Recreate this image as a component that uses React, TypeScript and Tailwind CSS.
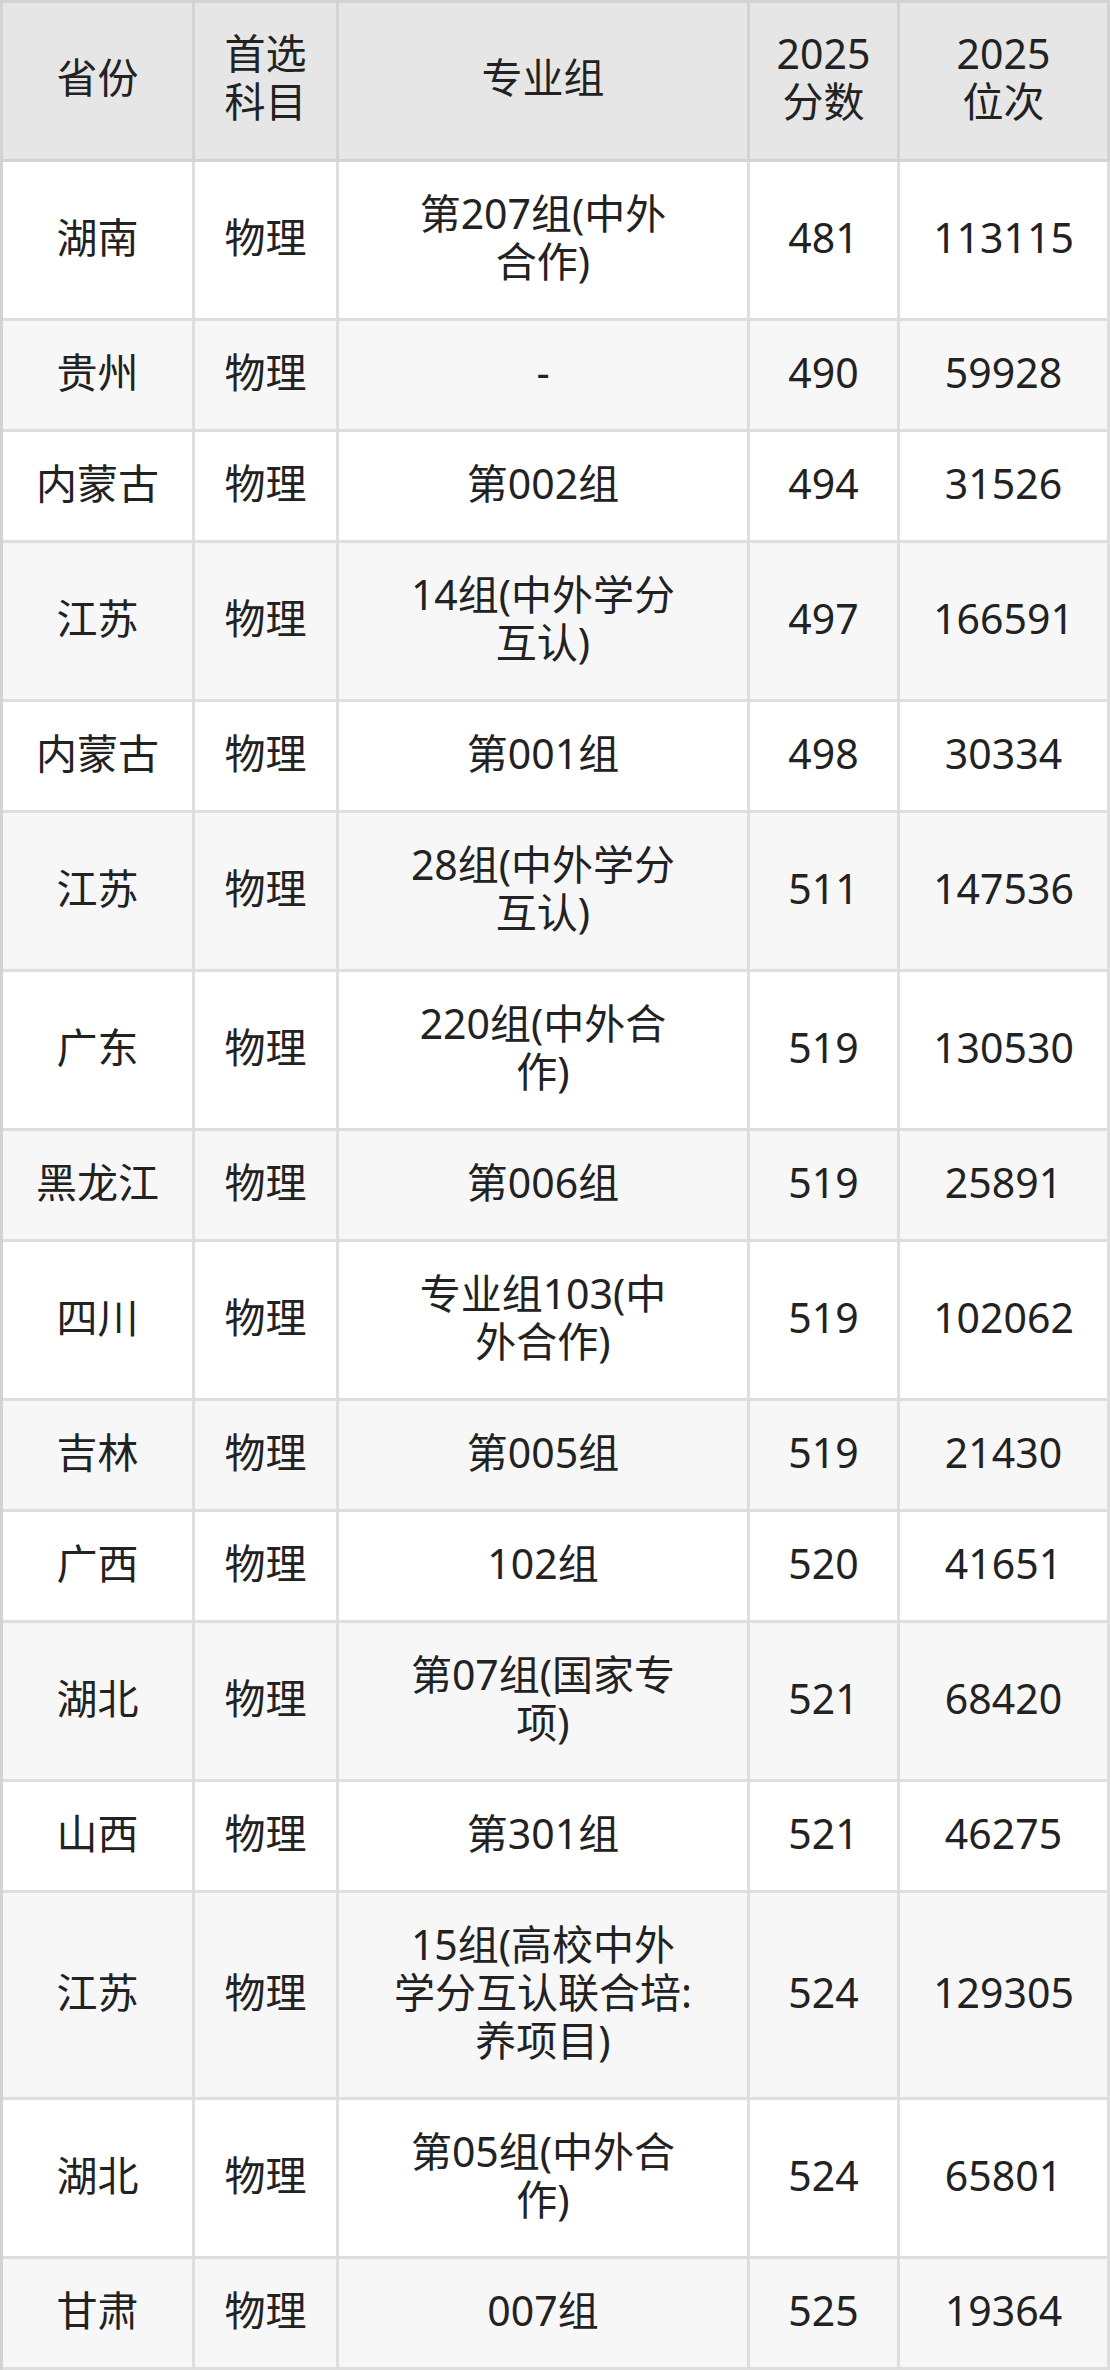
import React from "react";

type Row = { p: string; s: string; g: string[]; score: string; rank: string };

const rows: Row[] = [
  { p: "湖南", s: "物理", g: ["第207组(中外", "合作)"], score: "481", rank: "113115" },
  { p: "贵州", s: "物理", g: ["-"], score: "490", rank: "59928" },
  { p: "内蒙古", s: "物理", g: ["第002组"], score: "494", rank: "31526" },
  { p: "江苏", s: "物理", g: ["14组(中外学分", "互认)"], score: "497", rank: "166591" },
  { p: "内蒙古", s: "物理", g: ["第001组"], score: "498", rank: "30334" },
  { p: "江苏", s: "物理", g: ["28组(中外学分", "互认)"], score: "511", rank: "147536" },
  { p: "广东", s: "物理", g: ["220组(中外合", "作)"], score: "519", rank: "130530" },
  { p: "黑龙江", s: "物理", g: ["第006组"], score: "519", rank: "25891" },
  { p: "四川", s: "物理", g: ["专业组103(中", "外合作)"], score: "519", rank: "102062" },
  { p: "吉林", s: "物理", g: ["第005组"], score: "519", rank: "21430" },
  { p: "广西", s: "物理", g: ["102组"], score: "520", rank: "41651" },
  { p: "湖北", s: "物理", g: ["第07组(国家专", "项)"], score: "521", rank: "68420" },
  { p: "山西", s: "物理", g: ["第301组"], score: "521", rank: "46275" },
  { p: "江苏", s: "物理", g: ["15组(高校中外", "学分互认联合培:", "养项目)"], score: "524", rank: "129305" },
  { p: "湖北", s: "物理", g: ["第05组(中外合", "作)"], score: "524", rank: "65801" },
  { p: "甘肃", s: "物理", g: ["007组"], score: "525", rank: "19364" },
];

const grid = "grid grid-cols-[192px_144px_411px_150px_210px]";

function Lines({ lines }: { lines: string[] }) {
  return (
    <div className="flex flex-col items-center">
      {lines.map((l, i) => (
        <span key={i} className="block whitespace-nowrap">
          {l}
        </span>
      ))}
    </div>
  );
}

function HCell({ lines }: { lines: string[] }) {
  return (
    <div className="flex items-center justify-center border-r-[3px] border-b-[3px] border-[#d3d3d3] bg-[#e6e6e6] pt-[26px] pb-[34px] text-center">
      <Lines lines={lines} />
    </div>
  );
}

function Cell({ lines, alt }: { lines: string[]; alt: boolean }) {
  return (
    <div
      className={
        "flex items-center justify-center border-r-[3px] border-b-[3px] border-[#dedede] pt-[27px] pb-[33px] text-center " +
        (alt ? "bg-[#f7f7f7]" : "bg-white")
      }
    >
      <Lines lines={lines} />
    </div>
  );
}

export default function App() {
  return (
    <div
      className="w-[1110px] bg-white text-[41px] leading-[48px] text-[#222222]"
      style={{ fontFamily: '"Noto Sans", "Noto Sans CJK SC", sans-serif' }}
    >
      <div className="border-l-[3px] border-t-[3px] border-[#d3d3d3]">
        <div className={grid}>
          <HCell lines={["省份"]} />
          <HCell lines={["首选", "科目"]} />
          <HCell lines={["专业组"]} />
          <HCell lines={["2025", "分数"]} />
          <HCell lines={["2025", "位次"]} />
        </div>
        {rows.map((r, i) => {
          const alt = i % 2 === 1;
          return (
            <div key={i} className={grid}>
              <Cell lines={[r.p]} alt={alt} />
              <Cell lines={[r.s]} alt={alt} />
              <Cell lines={r.g} alt={alt} />
              <Cell lines={[r.score]} alt={alt} />
              <Cell lines={[r.rank]} alt={alt} />
            </div>
          );
        })}
      </div>
    </div>
  );
}
